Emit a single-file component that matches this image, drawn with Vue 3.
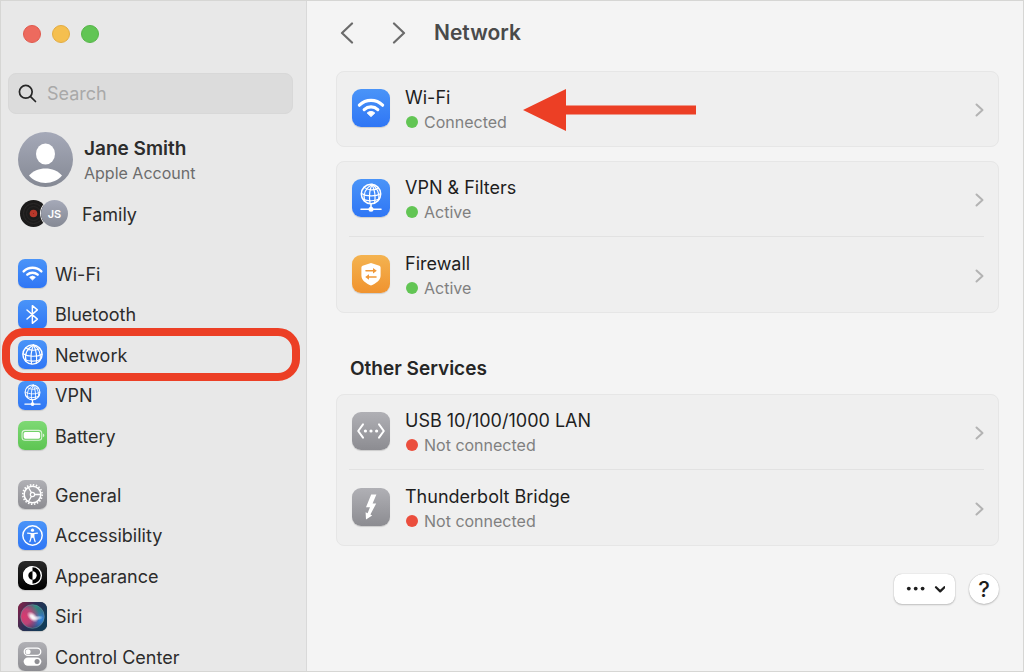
<script setup>
const groups = [
  [
    { label: 'Wi-Fi', icon: 'wifi', tone: 'blue' },
    { label: 'Bluetooth', icon: 'bluetooth', tone: 'blue' },
    { label: 'Network', icon: 'network', tone: 'blue', marked: true },
    { label: 'VPN', icon: 'vpn', tone: 'blue' },
    { label: 'Battery', icon: 'battery', tone: 'green' },
  ],
  [
    { label: 'General', icon: 'gear', tone: 'gray' },
    { label: 'Accessibility', icon: 'accessibility', tone: 'blue' },
    { label: 'Appearance', icon: 'appearance', tone: 'black' },
    { label: 'Siri', icon: 'siri', tone: 'black' },
    { label: 'Control Center', icon: 'controls', tone: 'gray' },
  ],
]

const wifi = [{ name: 'Wi-Fi', status: 'Connected', ok: true, icon: 'wifi', tone: 'blue', arrow: true }]
const filters = [
  { name: 'VPN & Filters', status: 'Active', ok: true, icon: 'vpn', tone: 'blue' },
  { name: 'Firewall', status: 'Active', ok: true, icon: 'firewall', tone: 'orange' },
]
const others = [
  { name: 'USB 10/100/1000 LAN', status: 'Not connected', ok: false, icon: 'lan', tone: 'gray' },
  { name: 'Thunderbolt Bridge', status: 'Not connected', ok: false, icon: 'bolt', tone: 'gray' },
]
const cards = [
  { rows: wifi },
  { rows: filters },
  { title: 'Other Services', rows: others },
]
</script>

<template>
  <div class="window">
    <svg class="defs" aria-hidden="true">
      <defs>
        <radialGradient id="siri-left" cx="0.15" cy="0.5" r="0.65">
          <stop offset="0" stop-color="#d93a6e" />
          <stop offset="0.5" stop-color="#d9447a" stop-opacity="0.8" />
          <stop offset="1" stop-color="#e0356c" stop-opacity="0" />
        </radialGradient>
        <radialGradient id="siri-right" cx="0.85" cy="0.6" r="0.5">
          <stop offset="0" stop-color="#2f86d8" />
          <stop offset="1" stop-color="#3b8df0" stop-opacity="0" />
        </radialGradient>
        <radialGradient id="siri-top" cx="0.65" cy="0.1" r="0.5">
          <stop offset="0" stop-color="#2f8f80" />
          <stop offset="1" stop-color="#35a08f" stop-opacity="0" />
        </radialGradient>
        <radialGradient id="siri-core" cx="0.5" cy="0.5" r="0.5">
          <stop offset="0" stop-color="#fff" />
          <stop offset="0.35" stop-color="#fff" stop-opacity="0.85" />
          <stop offset="1" stop-color="#fff" stop-opacity="0" />
        </radialGradient>
        <linearGradient id="siri-bg" x1="0" y1="0" x2="1" y2="0.5">
          <stop offset="0" stop-color="#8e2048" />
          <stop offset="0.5" stop-color="#2c2f55" />
          <stop offset="1" stop-color="#123c58" />
        </linearGradient>
      </defs>

      <symbol id="wifi" viewBox="0 0 38 38">
        <g fill="none" stroke="#fff" stroke-width="3.2" stroke-linecap="round">
          <path d="M7.4 16.2A16.6 16.6 0 0 1 30.6 16.2" />
          <path d="M12.2 20.6A10 10 0 0 1 25.8 20.6" />
        </g>
        <path d="M19 27.6L15.2 24A5.6 5.6 0 0 1 22.8 24Z" fill="#fff" stroke="#fff" stroke-width="1" stroke-linejoin="round" />
      </symbol>

      <symbol id="bluetooth" viewBox="0 0 38 38">
        <path d="M11.8 13.2L25.4 25L18.8 30.6V7.4L25.4 13L11.8 24.8" fill="none" stroke="#fff" stroke-width="1.9" stroke-linecap="round" stroke-linejoin="round" />
      </symbol>

      <symbol id="network" viewBox="0 0 38 38">
        <g fill="none" stroke="#fff" stroke-width="1.5" stroke-linecap="round">
          <circle cx="19" cy="19" r="12.6" stroke-width="1.9" />
          <path d="M20.5 6.6C12 11 8.4 19 10.5 28" />
          <path d="M20.5 6.6C17 14 16.4 23 17.8 31.4" />
          <path d="M20.5 6.6C24 14 25.2 22 23.8 30.6" />
          <path d="M20.5 6.6C27 10 30.4 18 29.2 26" />
          <path d="M10 10.2C15 14.4 24.4 14.3 28.7 11" />
          <path d="M6.6 18C13 22.4 25.6 22.3 31.3 18.6" />
          <path d="M9 25.8C15 28.4 24 28.2 29.4 25.4" />
        </g>
      </symbol>

      <symbol id="vpn" viewBox="0 0 38 38">
        <g fill="none" stroke="#fff" stroke-width="1.2" stroke-linecap="round">
          <circle cx="19" cy="15" r="9.7" stroke-width="1.5" />
          <path d="M20 5.4C13.6 9 11 15 12.5 22" />
          <path d="M20 5.4C17.4 11 17 18 18 24.6" />
          <path d="M20 5.4C22.8 11 23.7 17.6 22.6 24" />
          <path d="M20 5.4C25 8 27.8 14.4 26.8 20.6" />
          <path d="M12 8.4C16 11.6 23 11.5 26.4 9" />
          <path d="M9.5 14.4C14.4 17.7 24 17.6 28.5 14.8" />
          <path d="M11.3 20.4C16 22.4 23 22.2 27 20" />
          <path d="M19 24.8V30M9 30.2H29" stroke-width="1.6" />
        </g>
        <circle cx="19" cy="30.2" r="2.5" fill="#fff" />
      </symbol>

      <symbol id="battery" viewBox="0 0 38 38">
        <rect x="5.3" y="12.3" width="25.8" height="13" rx="4" fill="none" stroke="#fff" stroke-opacity="0.75" stroke-width="1.4" />
        <rect x="7.4" y="14.4" width="21.6" height="8.8" rx="2.2" fill="#fff" />
        <path d="M32.6 16.4C35.2 17.2 35.2 20.4 32.6 21.2Z" fill="#fff" fill-opacity="0.75" />
      </symbol>

      <symbol id="gear" viewBox="0 0 38 38">
        <g fill="none" stroke="#fff">
          <circle cx="19" cy="19" r="12.7" stroke-width="2.2" stroke-dasharray="2 1.99" />
          <circle cx="19" cy="19" r="10.9" stroke-width="2" />
          <circle cx="19" cy="19" r="2.8" stroke-width="1.6" />
          <path d="M21.8 19H30M17.6 16.6L13.5 9.5M17.6 21.4L13.5 28.5" stroke-width="1.7" />
        </g>
      </symbol>

      <symbol id="accessibility" viewBox="0 0 38 38">
        <circle cx="19" cy="19" r="12.7" fill="none" stroke="#fff" stroke-width="1.9" />
        <circle cx="19" cy="12" r="2.1" fill="#fff" />
        <path d="M12.6 16L17.4 16.6V21L15.6 27M25.4 16L20.6 16.6V21L22.4 27" fill="none" stroke="#fff" stroke-width="1.6" stroke-linecap="round" stroke-linejoin="round" />
        <path d="M16.8 15.8H21.2V22H16.8Z" fill="#fff" />
      </symbol>

      <symbol id="appearance" viewBox="0 0 38 38">
        <circle cx="19" cy="19" r="11.6" fill="#000" stroke="#fff" stroke-width="1.8" />
        <path d="M19 6.5A12.5 12.5 0 0 0 19 31.5V24.5A5.5 5.5 0 0 1 19 13.5Z" fill="#fff" />
        <path d="M19 13.5A5.5 5.5 0 0 1 19 24.5Z" fill="#fff" />
      </symbol>

      <symbol id="siri" viewBox="0 0 38 38">
        <rect width="38" height="38" rx="8.5" fill="url(#siri-bg)" />
        <circle cx="19" cy="19" r="15.5" fill="#39446f" />
        <circle cx="19" cy="19" r="15.5" fill="url(#siri-right)" />
        <circle cx="19" cy="19" r="15.5" fill="url(#siri-top)" />
        <circle cx="19" cy="19" r="15.5" fill="url(#siri-left)" stroke="#6aa6a6" stroke-opacity="0.6" />
        <ellipse cx="19" cy="19.5" rx="9" ry="5.4" transform="rotate(42 19 19.5)" fill="url(#siri-core)" />
        <ellipse cx="25" cy="21" rx="8" ry="3.4" transform="rotate(-8 25 21)" fill="url(#siri-core)" fill-opacity="0.6" />
      </symbol>

      <symbol id="controls" viewBox="0 0 38 38">
        <rect x="8.2" y="8" width="21.6" height="9.4" rx="4.7" fill="none" stroke="#fff" stroke-width="1.7" />
        <circle cx="13.2" cy="12.7" r="3.3" fill="#fff" />
        <rect x="7.4" y="20.2" width="23.2" height="11" rx="5.5" fill="#fff" />
        <circle cx="25" cy="25.7" r="3.3" fill="#8f8f94" />
      </symbol>

      <symbol id="firewall" viewBox="0 0 38 38">
        <path d="M19 8L27.4 10.8Q28.6 11.2 28.6 12.6V20.5C28.6 25.3 24.2 28.2 19 30.6C13.8 28.2 9.4 25.3 9.4 20.5V12.6Q9.4 11.2 10.6 10.8Z" fill="#fff" />
        <g fill="none" stroke="#f0993a" stroke-width="1.6" stroke-linecap="round">
          <path d="M14 15.8H22M24 22H16" />
        </g>
        <path d="M21 13L24.8 15.8L21 18.6ZM17 19.2L13.2 22L17 24.8Z" fill="#f0993a" />
      </symbol>

      <symbol id="lan" viewBox="0 0 38 38">
        <path d="M11 12.4L6.2 19L11 25.6M27 12.4L31.8 19L27 25.6" fill="none" stroke="#fff" stroke-width="2" stroke-linecap="round" stroke-linejoin="round" />
        <circle cx="13.4" cy="19" r="1.6" fill="#fff" />
        <circle cx="19" cy="19" r="1.6" fill="#fff" />
        <circle cx="24.6" cy="19" r="1.6" fill="#fff" />
      </symbol>

      <symbol id="bolt" viewBox="0 0 38 38">
        <path d="M19.2 6.4H24.4L20.6 15.4H24.2L18.4 26.6L20.2 27.4L14 31.6L13.6 24.2L15.6 25.2L18 19.2H14Z" fill="#fff" />
      </symbol>
    </svg>

    <aside class="sidebar">
      <div class="lights">
        <button class="light close" aria-label="Close"></button>
        <button class="light minimize" aria-label="Minimize"></button>
        <button class="light zoom" aria-label="Zoom"></button>
      </div>

      <label class="search">
        <svg class="lens" viewBox="0 0 20 20" aria-hidden="true">
          <circle cx="8.2" cy="8.2" r="6.7" />
          <path d="M13.2 13.2L18.4 18.4" />
        </svg>
        <input type="search" placeholder="Search" aria-label="Search" />
      </label>

      <a class="account" href="#account">
        <svg class="avatar" viewBox="0 0 55 55" aria-hidden="true">
          <defs>
            <linearGradient id="avatar-bg" x1="0" y1="0" x2="0" y2="1">
              <stop offset="0" stop-color="#a5a9b8" />
              <stop offset="1" stop-color="#858994" />
            </linearGradient>
          </defs>
          <circle cx="27.5" cy="27.5" r="27.5" fill="url(#avatar-bg)" />
          <ellipse cx="27.5" cy="22" rx="9.5" ry="10.5" fill="#fff" />
          <path d="M11 43.6C15 38.8 21 36.4 27.5 36.4S40 38.8 44 43.6C40 48.4 34 51 27.5 51S15 48.4 11 43.6Z" fill="#fff" />
        </svg>
        <span class="who">
          <span class="name">Jane Smith</span>
          <span class="kind">Apple Account</span>
        </span>
      </a>

      <a class="family" href="#family">
        <span class="faces">
          <svg class="record" viewBox="0 0 27 27" aria-hidden="true">
            <circle cx="13.5" cy="13.5" r="13.5" fill="#1c1b1b" />
            <circle cx="13.5" cy="13.5" r="10" fill="none" stroke="#2b2929" />
            <circle cx="13.5" cy="13.5" r="7" fill="none" stroke="#282626" />
            <circle cx="13.5" cy="13.5" r="3.8" fill="#b8382b" />
            <circle cx="13.5" cy="13.5" r="0.5" fill="#7a2018" />
          </svg>
          <span class="initials">JS</span>
        </span>
        <span class="label">Family</span>
      </a>

      <nav class="menu" aria-label="Settings">
        <ul v-for="(group, i) in groups" :key="i" class="group">
          <li v-for="item in group" :key="item.label">
            <a class="item" :class="{ marked: item.marked }" :href="'#' + item.icon">
              <span class="tile small" :class="item.tone">
                <svg aria-hidden="true"><use :href="'#' + item.icon" /></svg>
              </span>
              <span class="label">{{ item.label }}</span>
            </a>
          </li>
        </ul>
      </nav>
    </aside>

    <main class="content">
      <header class="toolbar">
        <button class="step" aria-label="Back">
          <svg viewBox="0 0 14 22" aria-hidden="true"><path d="M12 1.5L2 11L12 20.5" /></svg>
        </button>
        <button class="step" aria-label="Forward">
          <svg viewBox="0 0 14 22" aria-hidden="true"><path d="M2 1.5L12 11L2 20.5" /></svg>
        </button>
        <h1>Network</h1>
      </header>

      <section v-for="(card, i) in cards" :key="i" class="section">
        <h2 v-if="card.title">{{ card.title }}</h2>
        <div class="card">
          <a v-for="row in card.rows" :key="row.name" class="row" :href="'#' + row.icon">
            <span class="tile large" :class="row.tone">
              <svg aria-hidden="true"><use :href="'#' + row.icon" /></svg>
            </span>
            <span class="text">
              <span class="title">{{ row.name }}</span>
              <span class="status">
                <span class="dot" :class="{ ok: row.ok }"></span>{{ row.status }}
              </span>
            </span>
            <svg class="chevron" viewBox="0 0 9 14" aria-hidden="true"><path d="M1.5 1.5L7.5 7L1.5 12.5" /></svg>
            <svg v-if="row.arrow" class="arrow" viewBox="0 0 173 42" aria-hidden="true">
              <path d="M0 21L43 0V16.5H173V25.5H43V42Z" />
            </svg>
          </a>
        </div>
      </section>

      <footer class="actions">
        <button class="more" aria-label="More options" aria-haspopup="menu">
          <svg viewBox="0 0 40 12" aria-hidden="true">
            <circle cx="3.8" cy="5.6" r="1.9" />
            <circle cx="10.7" cy="5.6" r="1.9" />
            <circle cx="17.6" cy="5.6" r="1.9" />
            <path d="M31 4.2L35.2 8.4L39.4 4.2" />
          </svg>
        </button>
        <button class="help" aria-label="Help">?</button>
      </footer>
    </main>
  </div>
</template>

<style>
body {
  overflow: hidden;
}
</style>

<style scoped>
.window {
  display: grid;
  grid-template-columns: 306px 1fr;
  height: 100vh;
  box-sizing: border-box;
  overflow: hidden;
  border: 1px solid #d6d6d4;
  background: #f4f4f4;
  color: #2c2c2c;
  font-family: Inter, "Liberation Sans", sans-serif;
  font-size: 18px;
  line-height: 24px;
}
.defs {
  position: absolute;
  width: 0;
  height: 0;
}
a {
  color: inherit;
  text-decoration: none;
}
button {
  padding: 0;
  border: 0;
  background: none;
  font: inherit;
  color: inherit;
}
svg {
  display: block;
}

.sidebar {
  min-height: 0;
  border-right: 1px solid #d9d9d9;
  background: #e8e8e8;
}
.lights {
  display: flex;
  gap: 11px;
  padding: 24px 22px 0;
}
.light {
  width: 18px;
  height: 18px;
  border-radius: 50%;
  box-sizing: border-box;
}
.close {
  background: #ed6a5e;
  border: 1px solid #e0594d;
}
.minimize {
  background: #f5bf4f;
  border: 1px solid #e3ac42;
}
.zoom {
  background: #61c554;
  border: 1px solid #56b549;
}
.search {
  display: flex;
  align-items: center;
  gap: 10px;
  height: 41px;
  margin: 30px 13px 0 7px;
  padding: 0 9px;
  box-sizing: border-box;
  border: 1px solid #d8d8d8;
  border-radius: 8px;
  background: #dcdcdc;
}
.lens {
  flex: none;
  width: 19px;
  height: 19px;
  fill: none;
  stroke: #262626;
  stroke-width: 1.8;
  stroke-linecap: round;
}
.search input {
  flex: 1;
  min-width: 0;
  padding: 0;
  border: 0;
  outline: 0;
  background: none;
  font: inherit;
  color: #2c2c2c;
}
.search input::placeholder {
  color: #a9a9a9;
}
.account {
  display: flex;
  align-items: center;
  gap: 11px;
  margin: 18px 17px 0;
}
.avatar {
  width: 55px;
  height: 55px;
}
.who {
  display: grid;
  padding-top: 2px;
}
.name {
  font-size: 19px;
  font-weight: 600;
}
.kind {
  font-size: 16px;
  color: #6c6c6c;
}
.family {
  display: flex;
  align-items: center;
  gap: 14px;
  margin: 13px 19px 0;
}
.label {
  padding-top: 2px;
}
.faces {
  display: flex;
}
.record {
  width: 27px;
  height: 27px;
}
.initials {
  width: 27px;
  height: 27px;
  margin-left: -6px;
  border-radius: 50%;
  box-shadow: 0 0 0 1px #e8e8e8;
  background: linear-gradient(#a5a9b8, #858994);
  color: #fff;
  font-size: 11px;
  font-weight: 600;
  line-height: 28px;
  text-align: center;
}
.menu {
  display: grid;
  gap: 30px;
  margin: 32px 17px 0;
}
.group {
  display: flex;
  flex-direction: column;
  justify-content: space-between;
  min-height: 191px;
  margin: 0;
  padding: 0;
  list-style: none;
}
.item {
  position: relative;
  display: flex;
  align-items: center;
  gap: 8px;
}
.marked::after {
  content: "";
  position: absolute;
  z-index: 1;
  inset: -12px -11px -12px -16px;
  border: 8px solid #ec3f25;
  border-radius: 22px;
}

.tile {
  flex: none;
  box-shadow: 0 1px 1px rgba(0, 0, 0, 0.15);
}
.tile svg {
  width: 100%;
  height: 100%;
}
.small {
  width: 29px;
  height: 29px;
  border-radius: 7px;
}
.large {
  width: 38px;
  height: 38px;
  margin-top: 17px;
  border-radius: 9px;
}
.blue {
  background: linear-gradient(#4a94f8, #2f76f5);
}
.green {
  background: linear-gradient(#7ed975, #5dc552);
}
.gray {
  background: linear-gradient(#b0b0b5, #8c8c91);
}
.orange {
  background: linear-gradient(#f4b350, #f0932f);
}
.black {
  background: linear-gradient(#2a2a2a, #000);
}

.content {
  min-width: 0;
  padding: 0 24px 0 29px;
}
.toolbar {
  display: flex;
  align-items: center;
  height: 64px;
  margin-bottom: 6px;
}
.step {
  display: grid;
  place-items: center;
  width: 22px;
  height: 30px;
  margin-right: 30px;
}
.step svg {
  width: 14px;
  height: 22px;
  fill: none;
  stroke: #6b6b6b;
  stroke-width: 2.2;
  stroke-linecap: round;
  stroke-linejoin: round;
}
h1 {
  margin: 0 0 0 -6px;
  font-size: 21px;
  font-weight: 600;
  line-height: 28px;
  color: #4a4a4a;
}
.section + .section {
  margin-top: 14px;
}
h2 {
  margin: 0;
  padding: 30px 14px 13px;
  font-size: 19px;
  font-weight: 600;
  line-height: 24px;
  color: #262626;
}
.card {
  border: 1px solid #e6e6e6;
  border-radius: 8px;
  background: #efefef;
}
.row {
  position: relative;
  display: flex;
  align-items: flex-start;
  height: 74px;
  padding: 0 14px 0 15px;
}
.row:not(:last-child) {
  height: 76px;
}
.row:not(:last-child)::after {
  content: "";
  position: absolute;
  bottom: 1px;
  left: 12px;
  right: 14px;
  height: 1px;
  background: #e2e2e2;
}
.text {
  display: grid;
  flex: 1;
  margin: 14px 0 0 15px;
}
.title {
  color: #1e1e1e;
}
.status {
  display: flex;
  align-items: center;
  gap: 6px;
  font-size: 16px;
  color: #808080;
}
.dot {
  width: 12px;
  height: 12px;
  margin-left: 1px;
  border-radius: 50%;
  background: #eb4e3d;
}
.dot.ok {
  background: #62c554;
}
.chevron {
  width: 9px;
  height: 14px;
  margin-top: 31px;
  fill: none;
  stroke: #b3b3b3;
  stroke-width: 2;
  stroke-linecap: round;
  stroke-linejoin: round;
}
.arrow {
  position: absolute;
  top: 17px;
  left: 186px;
  width: 173px;
  height: 42px;
  fill: #ec3f25;
}
.actions {
  display: flex;
  justify-content: flex-end;
  gap: 14px;
  margin-top: 28px;
}
.more,
.help {
  height: 30px;
  background: #fff;
  box-shadow: 0 0 1px rgba(0, 0, 0, 0.3), 0 1px 2px rgba(0, 0, 0, 0.2);
}
.more {
  display: grid;
  place-items: center;
  width: 61px;
  border-radius: 8px;
}
.more svg {
  width: 40px;
  height: 12px;
  fill: #1e1e1e;
}
.more path {
  fill: none;
  stroke: #1e1e1e;
  stroke-width: 2.2;
  stroke-linecap: round;
  stroke-linejoin: round;
}
.help {
  width: 30px;
  border-radius: 50%;
  font-size: 22px;
  font-weight: 500;
  line-height: 30px;
  color: #1e1e1e;
}
</style>
